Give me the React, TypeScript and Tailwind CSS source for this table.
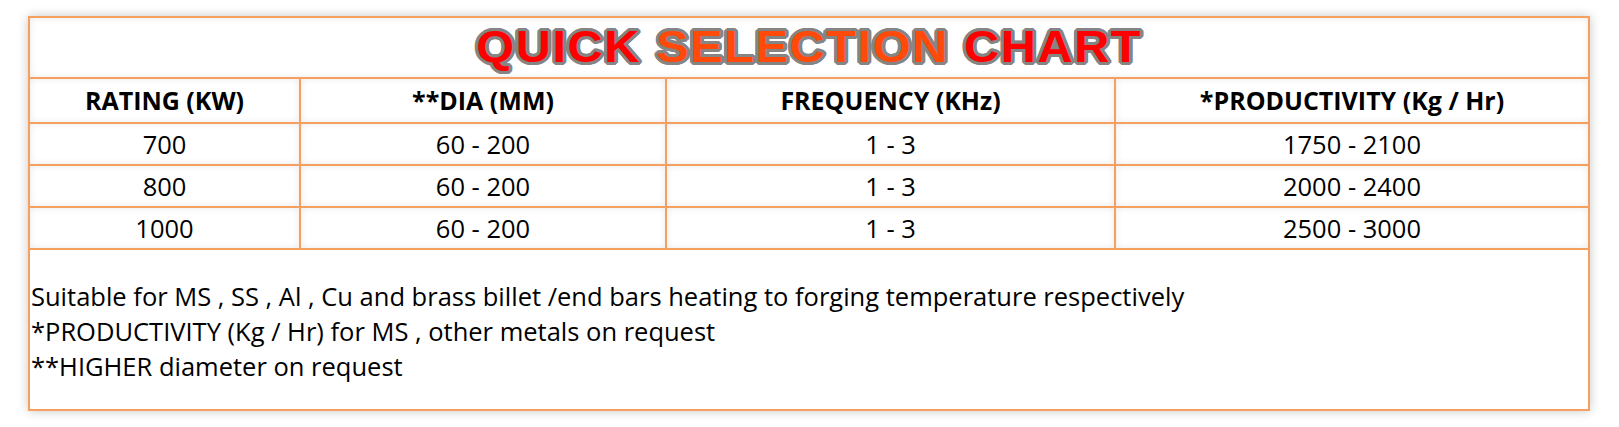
import React from "react";

const headers = ["RATING (KW)", "**DIA (MM)", "FREQUENCY (KHz)", "*PRODUCTIVITY (Kg / Hr)"];

const rows = [
  ["700", "60 - 200", "1 - 3", "1750 - 2100"],
  ["800", "60 - 200", "1 - 3", "2000 - 2400"],
  ["1000", "60 - 200", "1 - 3", "2500 - 3000"],
];

const notes = [
  "Suitable for MS , SS , Al , Cu and brass billet /end bars heating to forging temperature respectively",
  "*PRODUCTIVITY (Kg / Hr) for MS , other metals on request",
  "**HIGHER diameter on request",
];

const cell =
  "flex items-center justify-center border-[#f5a060] shadow-[inset_0_0_7px_rgba(0,0,0,0.09)]";

// gray outline is built from text shadows so the title stays one text
function Title() {
  return (
    <div className="-mt-[3px] scale-x-108 font-['Liberation_Sans',Arial,sans-serif] text-[45px] font-bold leading-none tracking-[1.5px] [text-shadow:3px_0_#858585,-3px_0_#858585,0_3px_#858585,0_-3px_#858585,2px_2px_#858585,-2px_-2px_#858585,2px_-2px_#858585,-2px_2px_#858585,1px_3px_#858585,-1px_3px_#858585,1px_-3px_#858585,-1px_-3px_#858585,3px_1px_#858585,3px_-1px_#858585,-3px_1px_#858585,-3px_-1px_#858585]">
      <span className="text-[#ff0000]">QUICK </span>
      <span className="text-[#ff4a0a]">SELECTION </span>
      <span className="text-[#ff0000]">CHART</span>
    </div>
  );
}

export default function App() {
  return (
    <div className="min-h-[427px] bg-white pt-[16px] pl-[28px] font-['Open_Sans',sans-serif] text-black">
      <div className="w-[1562px] border-2 border-[#f5a060] bg-white shadow-[0_0_10px_rgba(0,0,0,0.22)]">
        {/* title */}
        <div className={`${cell} h-[61px] border-b-2`}>
          <Title />
        </div>

        {/* table */}
        <div className="grid grid-cols-[271px_366px_449px_1fr]">
          {headers.map((h, i) => (
            <div
              key={h}
              className={`${cell} h-[45px] border-b-2 text-[25px] font-bold ${i < 3 ? "border-r-2" : ""}`}
            >
              {h}
            </div>
          ))}
          {rows.map((r, ri) =>
            r.map((v, i) => (
              <div
                key={`${ri}-${i}`}
                className={`${cell} h-[42px] border-b-2 text-[25.5px] ${i < 3 ? "border-r-2" : ""}`}
              >
                {v}
              </div>
            ))
          )}
        </div>

        {/* notes */}
        <div className="h-[159px] pt-[29px] pl-[1px] text-[25.5px] leading-[35px]">
          {notes.map((n) => (
            <div key={n}>{n}</div>
          ))}
        </div>
      </div>
    </div>
  );
}
